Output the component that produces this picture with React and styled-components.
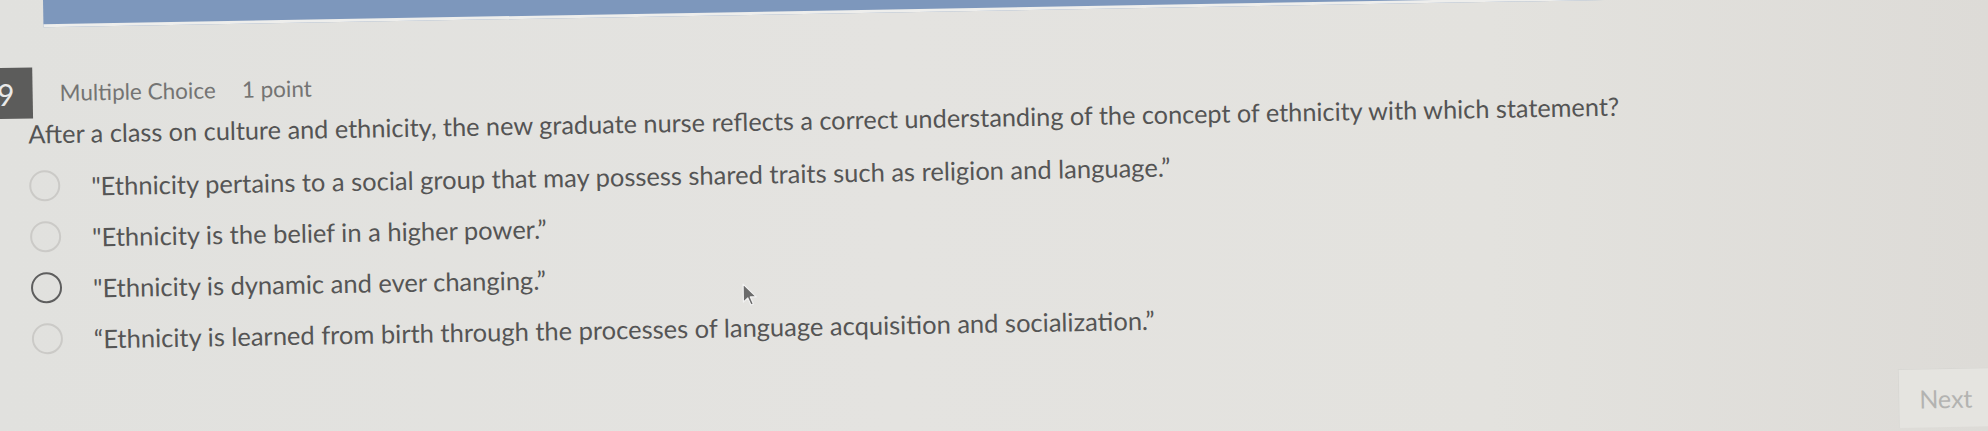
import React from "react";
import styled, { createGlobalStyle } from "styled-components";

const GlobalStyle = createGlobalStyle`
  html, body {
    margin: 0;
    padding: 0;
    background: #e2e1de;
  }
  #root {
    overflow: hidden;
  }
`;

const options = [
  { id: 1, text: "\"Ethnicity pertains to a social group that may possess shared traits such as religion and language.\u201d" },
  { id: 2, text: "\"Ethnicity is the belief in a higher power.\u201d" },
  { id: 3, text: "\"Ethnicity is dynamic and ever changing.\u201d", focused: true },
  { id: 4, text: "\u201cEthnicity is learned from birth through the processes of language acquisition and socialization.\u201d" },
];

const Cursor = () => (
  <CursorBox>
    <svg width="16" height="24" viewBox="0 0 16 24">
      <path
        d="M1 1 L1 19 L5.5 15 L8.5 22 L11 21 L8 14 L14 14 Z"
        fill="#6b6b6b"
        stroke="#f2f2f2"
        strokeWidth="1.2"
        strokeLinejoin="round"
      />
    </svg>
  </CursorBox>
);

const App = () => {
  return (
    <Viewport>
      <GlobalStyle />
      <Sheet>
        <Header />
        <MetaRow>
          <Badge>9</Badge>
          <MetaLabel>Multiple Choice</MetaLabel>
          <MetaLabel>1 point</MetaLabel>
        </MetaRow>
        <Question>
          After a class on culture and ethnicity, the new graduate nurse reflects a correct understanding of the concept of
          ethnicity with which statement?
        </Question>
        <OptionList>
          {options.map((option) => (
            <OptionRow key={option.id}>
              <Radio focused={option.focused} />
              <OptionText>{option.text}</OptionText>
            </OptionRow>
          ))}
        </OptionList>
        <Footer>
          <NextButton>Next</NextButton>
        </Footer>
        <Cursor />
      </Sheet>
    </Viewport>
  );
};

export default App;

const Viewport = styled.div`
  width: 100%;
  height: 431px;
  overflow: hidden;
  background: linear-gradient(90deg, #e1e1de 0%, #e4e3e0 45%, #e3e2de 75%, #dddbd7 100%);
  font-family: Lato, "Open Sans", "Liberation Sans", sans-serif;
`;

const Sheet = styled.div`
  position: relative;
  width: 2000px;
  margin: -30px 0 0 -30px;
  padding: 0 0 60px 30px;
  transform-origin: 30px 30px;
  transform: rotate(-1deg);
`;

const Header = styled.div`
  margin-left: 43px;
  height: 55px;
  background: #7d97bc;
  border-bottom: 3px solid #eeeeec;
`;

const MetaRow = styled.div`
  display: flex;
  align-items: center;
  height: 51px;
  margin-top: 40px;
`;

const Badge = styled.div`
  width: 54px;
  height: 51px;
  margin-left: -23px;
  margin-right: 27px;
  display: flex;
  align-items: center;
  justify-content: center;
  background: #5c5c5b;
  color: #e9e9e9;
  font-size: 30px;
`;

const MetaLabel = styled.span`
  margin-right: 26px;
  font-size: 22.5px;
  line-height: 1.2;
  color: #747473;
`;

const Question = styled.p`
  margin: 0 0 0 26px;
  font-size: 25.3px;
  line-height: 1.2;
  color: #545454;
`;

const OptionList = styled.div`
  margin-top: 12px;
  padding-left: 26px;
`;

const OptionRow = styled.div`
  display: flex;
  align-items: center;
  gap: 31px;
  height: 51px;
`;

const Radio = styled.span`
  box-sizing: border-box;
  width: 31px;
  height: 31px;
  flex: none;
  border-radius: 50%;
  border: ${(p) => (p.focused ? "2.5px solid #5e5e5e" : "2px solid #cbcac7")};
`;

const OptionText = styled.span`
  font-size: 25.5px;
  line-height: 1.2;
  color: #555555;
`;

const Footer = styled.div`
  display: flex;
  justify-content: flex-end;
  margin-top: 37px;
`;

const NextButton = styled.div`
  box-sizing: border-box;
  width: 109px;
  padding: 14px 0 14px 20px;
  background: #e5e4e0;
  border-top: 1px solid #d8d7d3;
  border-left: 1px solid #d8d7d3;
  font-size: 25px;
  line-height: 1.2;
  color: #b3b3b1;
`;

const CursorBox = styled.div`
  position: absolute;
  left: 767px;
  top: 326px;
  line-height: 0;
`;
